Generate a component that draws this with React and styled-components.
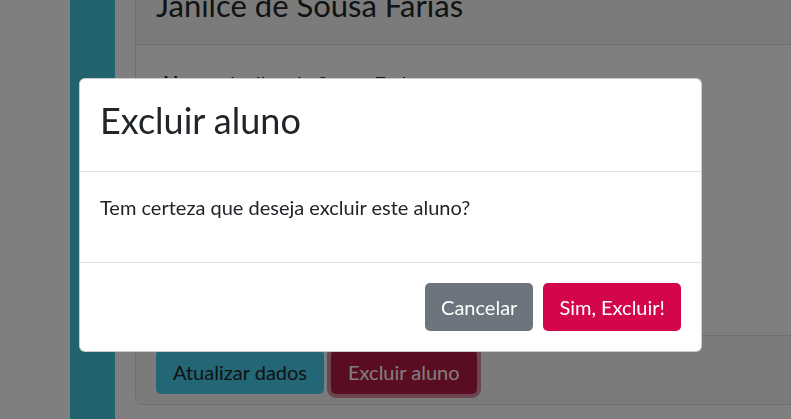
import React from 'react'
import styled, { createGlobalStyle } from 'styled-components'

const GlobalStyle = createGlobalStyle`
    html, body {
        margin: 0;
        padding: 0;
        background: #fff;
    }
    body {
        font-family: Lato, "Liberation Sans", sans-serif;
        color: #212529;
        width: 791px;
        height: 419px;
        overflow: hidden;
    }
    * {
        box-sizing: border-box;
    }
`;

// página por trás do modal
const Page = styled.div`
    display: flex;
    width: 791px;
    height: 419px;
    overflow: hidden;
    padding-left: 70px;
`;
const Sidebar = styled.aside`
    flex: 0 0 45px;
    background-color: #44c4de;
`;
const Main = styled.main`
    flex: 0 0 auto;
    padding-left: 20px;
`;
const Card = styled.section`
    width: 720px;
    margin-top: -20px;
    border: 1px solid #dfdfdf;
    border-radius: 6px;
    overflow: hidden;
`;
const CardHeader = styled.header`
    height: 64px;
    padding: 11px 20px 0;
    background-color: #f7f7f7;
    border-bottom: 1px solid #dedede;
`;
const CardTitle = styled.h3`
    margin: 0;
    font-size: 31px;
    font-weight: 400;
    line-height: 26px;
`;
const CardBody = styled.div`
    height: 290px;
    padding: 26px 27px;
    font-size: 20px;
`;
const Label = styled.span`
    font-weight: 700;
`;
const CardFooter = styled.footer`
    display: flex;
    gap: 7px;
    padding: 14px 20px 10px;
    background-color: #f7f7f7;
    border-top: 1px solid #dedede;
`;
const Button = styled.button`
    height: ${p => p.$size === 'lg' ? '48px' : '44px'};
    padding: 0 ${p => p.$size === 'lg' ? '16px' : '17px'};
    border: none;
    border-radius: 5px;
    font-family: inherit;
    font-size: 20px;
    color: ${p => p.$text || '#fff'};
    background-color: ${p => p.$bg};
    box-shadow: ${p => p.$focus ? '0 0 0 4px #d98ba0' : 'none'};
    cursor: pointer;
`;

// modal
const Backdrop = styled.div`
    position: fixed;
    inset: 0;
    background-color: rgba(0, 0, 0, 0.5);
`;
const Dialog = styled.div`
    position: fixed;
    top: 78px;
    left: 79px;
    width: 623px;
    background: #fff;
    border: 1px solid rgba(0, 0, 0, 0.2);
    border-radius: 6px;
    display: flex;
    flex-direction: column;
`;
const ModalHeader = styled.div`
    padding: 20px 20px 29px;
    border-bottom: 1px solid #dee2e6;
`;
const ModalTitle = styled.h1`
    margin: 0;
    font-size: 36px;
    font-weight: 400;
    line-height: 43px;
    color: #212529;
`;
const ModalBody = styled.div`
    padding: 20px 20px 40px;
    p {
        margin: 0;
        font-size: 20px;
        line-height: 30px;
    }
`;
const ModalFooter = styled.div`
    display: flex;
    justify-content: flex-end;
    gap: 10px;
    padding: 20px;
    border-top: 1px solid #dee2e6;
`;

export default function App() {
    return (
        <>
            <GlobalStyle />
            <Page>
                <Sidebar />
                <Main>
                    <Card>
                        <CardHeader>
                            <CardTitle>Janilce de Sousa Farias</CardTitle>
                        </CardHeader>
                        <CardBody>
                            <Label>Nome:</Label> Janilce de Sousa Farias
                        </CardBody>
                        <CardFooter>
                            <Button $bg="#46ccea" $text="#212529">Atualizar dados</Button>
                            <Button $bg="#b41840" $focus>Excluir aluno</Button>
                        </CardFooter>
                    </Card>
                </Main>
            </Page>
            <Backdrop />
            <Dialog>
                <ModalHeader>
                    <ModalTitle>Excluir aluno</ModalTitle>
                </ModalHeader>
                <ModalBody>
                    <p>Tem certeza que deseja excluir este aluno?</p>
                </ModalBody>
                <ModalFooter>
                    <Button $size="lg" $bg="#6c757d">Cancelar</Button>
                    <Button $size="lg" $bg="#d4064a">Sim, Excluir!</Button>
                </ModalFooter>
            </Dialog>
        </>
    )
}
